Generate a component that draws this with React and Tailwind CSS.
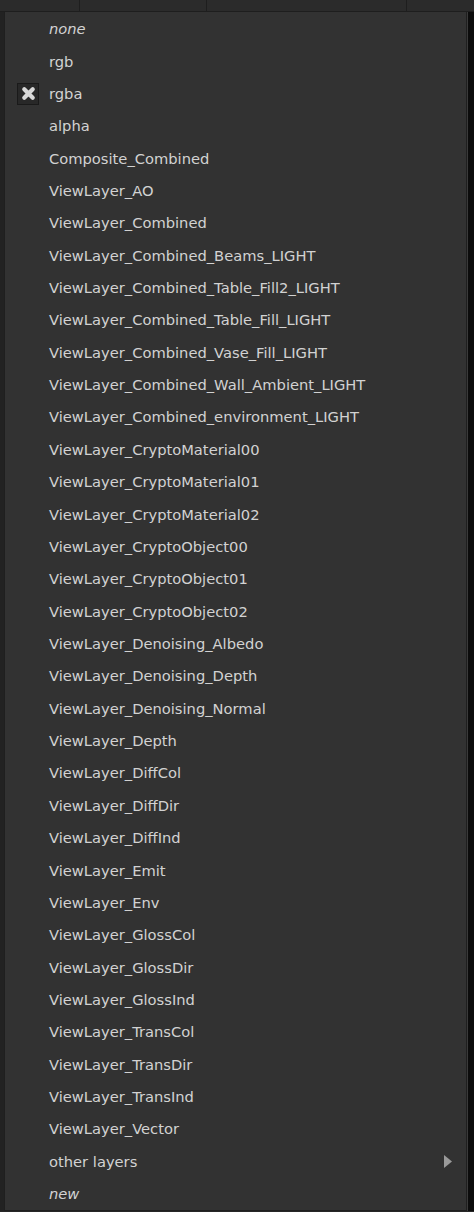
const items = [
  { label: 'none', italic: true },
  { label: 'rgb' },
  { label: 'rgba', checked: true },
  { label: 'alpha' },
  { label: 'Composite_Combined' },
  { label: 'ViewLayer_AO' },
  { label: 'ViewLayer_Combined' },
  { label: 'ViewLayer_Combined_Beams_LIGHT' },
  { label: 'ViewLayer_Combined_Table_Fill2_LIGHT' },
  { label: 'ViewLayer_Combined_Table_Fill_LIGHT' },
  { label: 'ViewLayer_Combined_Vase_Fill_LIGHT' },
  { label: 'ViewLayer_Combined_Wall_Ambient_LIGHT' },
  { label: 'ViewLayer_Combined_environment_LIGHT' },
  { label: 'ViewLayer_CryptoMaterial00' },
  { label: 'ViewLayer_CryptoMaterial01' },
  { label: 'ViewLayer_CryptoMaterial02' },
  { label: 'ViewLayer_CryptoObject00' },
  { label: 'ViewLayer_CryptoObject01' },
  { label: 'ViewLayer_CryptoObject02' },
  { label: 'ViewLayer_Denoising_Albedo' },
  { label: 'ViewLayer_Denoising_Depth' },
  { label: 'ViewLayer_Denoising_Normal' },
  { label: 'ViewLayer_Depth' },
  { label: 'ViewLayer_DiffCol' },
  { label: 'ViewLayer_DiffDir' },
  { label: 'ViewLayer_DiffInd' },
  { label: 'ViewLayer_Emit' },
  { label: 'ViewLayer_Env' },
  { label: 'ViewLayer_GlossCol' },
  { label: 'ViewLayer_GlossDir' },
  { label: 'ViewLayer_GlossInd' },
  { label: 'ViewLayer_TransCol' },
  { label: 'ViewLayer_TransDir' },
  { label: 'ViewLayer_TransInd' },
  { label: 'ViewLayer_Vector' },
  { label: 'other layers', submenu: true },
  { label: 'new', italic: true },
];

function CheckBox() {
  return (
    <div className="w-[22px] h-[22px] bg-[#282828] border border-[#1a1a1a] flex items-center justify-center">
      <svg width="15" height="15" viewBox="0 0 16 16">
        <path d="M3.5 3.5 L12.5 12.5 M12.5 3.5 L3.5 12.5" stroke="#d8d8d8" strokeWidth="4.5" strokeLinecap="round" />
      </svg>
    </div>
  );
}

export default function App() {
  return (
    <div className="w-[474px] h-[1212px] bg-[#272727] overflow-hidden relative">
      <div className="h-[12px] bg-[#2b2b2b] border-b border-[#1e1e1e] flex">
        <div className="w-[80px] border-r border-[#1e1e1e]" />
        <div className="w-[127px] border-r border-[#1e1e1e]" />
        <div className="w-[200px] border-r border-[#1e1e1e]" />
      </div>
      <div className="flex">
        <div className="w-[4px] bg-[#222]" />
        <div
          className="w-[463px] pt-[1px] bg-[#323232] border-l border-r border-b border-[#1f1f1f] text-[#d2d2d2] text-[14.7px]"
          style={{ fontFamily: '"DejaVu Sans", Verdana, sans-serif' }}
        >
          {items.map((it) => (
            <div key={it.label} className="h-[32.36px] flex items-center relative">
              <div className="w-[44px] pl-[12px] flex items-center">
                {it.checked && <CheckBox />}
              </div>
              <span className={it.italic ? 'italic' : ''}>{it.label}</span>
              {it.submenu && (
                <svg className="absolute right-[14px]" width="8" height="13" viewBox="0 0 8 13">
                  <path d="M0 0 L8 6.5 L0 13 Z" fill="#9a9a9a" />
                </svg>
              )}
            </div>
          ))}
        </div>
        <div className="w-[7px] bg-[#0c0c0c] border-l border-[#3a3a3a]" />
      </div>
    </div>
  );
}
